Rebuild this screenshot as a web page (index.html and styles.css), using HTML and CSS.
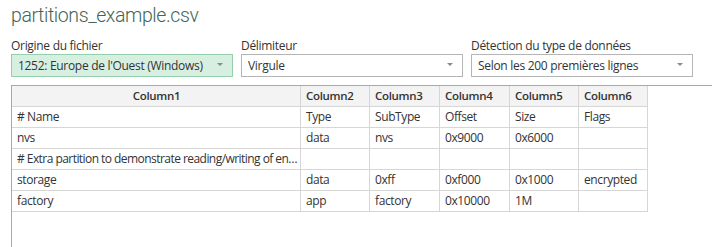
FILE: index.html
```html
<!DOCTYPE html>
<html lang="fr">
<head>
  <meta charset="UTF-8">
  <title>partitions_example.csv</title>
  <link rel="stylesheet" href="styles.css">
</head>
<body>
  <div class="page">
    <h1 class="file-title">partitions_example.csv</h1>

    <!-- Import options -->
    <div class="options">
      <div class="field">
        <label>Origine du fichier</label>
        <div class="combo selected"><span>1252: Europe de l'Ouest (Windows)</span><i class="arrow"></i></div>
      </div>
      <div class="field">
        <label>Délimiteur</label>
        <div class="combo"><span>Virgule</span><i class="arrow"></i></div>
      </div>
      <div class="field">
        <label>Détection du type de données</label>
        <div class="combo"><span>Selon les 200 premières lignes</span><i class="arrow"></i></div>
      </div>
    </div>

    <!-- Preview grid -->
    <div class="preview">
      <table class="grid">
        <colgroup>
          <col class="c1"><col class="c2"><col class="c3"><col class="c4"><col class="c5"><col class="c6">
        </colgroup>
        <thead>
          <tr><th class="first">Column1</th><th>Column2</th><th>Column3</th><th>Column4</th><th>Column5</th><th>Column6</th></tr>
        </thead>
        <tbody>
          <tr><td># Name</td><td>Type</td><td>SubType</td><td>Offset</td><td>Size</td><td>Flags</td></tr>
          <tr><td>nvs</td><td>data</td><td>nvs</td><td>0x9000</td><td>0x6000</td><td></td></tr>
          <tr><td class="long"># Extra partition to demonstrate reading/writing of encrypted flash</td><td></td><td></td><td></td><td></td><td></td></tr>
          <tr><td>storage</td><td>data</td><td>0xff</td><td>0xf000</td><td>0x1000</td><td>encrypted</td></tr>
          <tr><td>factory</td><td>app</td><td>factory</td><td>0x10000</td><td>1M</td><td></td></tr>
        </tbody>
      </table>
    </div>
  </div>
</body>
</html>
```

FILE: styles.css
```css
/* Reset */
* { margin: 0; padding: 0; box-sizing: border-box; }
html, body { height: 100%; }
body { font-family: "Open Sans", "Noto Sans", Arial, sans-serif; font-size: 12px; letter-spacing: -0.3px; color: #333; background: #fff; overflow: hidden; }
.page { padding-left: 11px; height: 100%; display: flex; flex-direction: column; }

/* Title */
.file-title { font-family: Roboto, "Open Sans", sans-serif; font-weight: 300; font-size: 19.5px; color: #3f6658; line-height: 28px; padding-top: 2px; height: 38px; letter-spacing: -0.4px; }

/* Option dropdowns */
.options { display: flex; gap: 8px; }
.field { width: 222px; display: flex; flex-direction: column; }
.field label { font-size: 12px; line-height: 16px; color: #333; height: 16px; }
.combo { height: 23px; border: 1px solid #b5b5b5; background: #fff; display: flex; align-items: center; padding: 0 9px 0 6px; color: #333; }
.combo span { flex: 1; white-space: nowrap; overflow: hidden; }
.combo.selected { background: #d7efe1; border-color: #95cfac; }
.arrow { width: 0; height: 0; border-left: 3px solid transparent; border-right: 3px solid transparent; border-top: 3px solid #8a8a8a; margin-top: -2px; }

/* Preview grid */
.preview { margin-top: 8px; flex: 1; border-left: 1px solid #a8a8a8; border-top: 1px solid #a8a8a8; }
.grid { border-collapse: separate; border-spacing: 0; table-layout: fixed; width: 436px; }
.grid col.c1 { width: 289px; }
.grid col.c2 { width: 69px; }
.grid col.c3 { width: 70px; }
.grid col.c4 { width: 70px; }
.grid col.c5 { width: 69px; }
.grid col.c6 { width: 69px; }
.grid th, .grid td { height: 21px; line-height: 20px; padding: 0 4px 0 5px; border-right: 1px solid #d6d6d6; border-bottom: 1px solid #d6d6d6; white-space: nowrap; overflow: hidden; text-overflow: ellipsis; text-align: left; }
.grid td { letter-spacing: -0.4px; }
.grid td.long { letter-spacing: -0.55px; padding-right: 2px; }
.grid th { background: #f3f3f3; font-weight: 600; font-size: 11.5px; }
.grid th.first { text-align: center; }
```
